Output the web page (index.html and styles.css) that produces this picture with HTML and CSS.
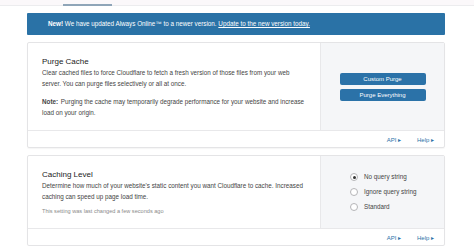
FILE: index.html
```html
<!DOCTYPE html>
<html lang="en">

<head>
    <meta charset="UTF-8">
    <meta name="viewport" content="width=device-width, initial-scale=1.0">
    <title>Caching</title>
    <link rel="stylesheet" href="styles.css">
</head>

<body>
    <nav class="tabs">
        <span class="tab active"></span>
    </nav>

    <main class="page">
        <div class="banner">
            <strong>New!</strong> We have updated Always Online™ to a newer version.
            <a href="#">Update to the new version today.</a>
        </div>

        <section class="card">
            <div class="card-main">
                <div class="card-text">
                    <h3>Purge Cache</h3>
                    <p>Clear cached files to force Cloudflare to fetch a fresh version of those files from your web<br>
                        server. You can purge files selectively or all at once.</p>
                    <p class="note"><strong>Note:</strong> Purging the cache may temporarily degrade performance for
                        your website and increase<br> load on your origin.</p>
                </div>
                <div class="card-control">
                    <div class="buttons">
                        <button>Custom Purge</button>
                        <button>Purge Everything</button>
                    </div>
                </div>
            </div>
            <div class="card-footer">
                <a href="#">API ▸</a>
                <a href="#">Help ▸</a>
            </div>
        </section>

        <section class="card">
            <div class="card-main">
                <div class="card-text">
                    <h3>Caching Level</h3>
                    <p>Determine how much of your website's static content you want Cloudflare to cache. Increased<br>
                        caching can speed up page load time.</p>
                    <p class="changed">This setting was last changed a few seconds ago</p>
                </div>
                <div class="card-control radios-wrap">
                    <div class="radios">
                        <label class="radio"><span class="dot checked"></span>No query string</label>
                        <label class="radio"><span class="dot"></span>Ignore query string</label>
                        <label class="radio"><span class="dot"></span>Standard</label>
                    </div>
                </div>
            </div>
            <div class="card-footer">
                <a href="#">API ▸</a>
                <a href="#">Help ▸</a>
            </div>
        </section>
    </main>
</body>

</html>
```

FILE: styles.css
```css
body {
    font-family: 'Liberation Sans', Arial, sans-serif;
    background-color: #fff;
    margin: 0;
    padding: 0;
    color: #333;
}

.tabs {
    display: flex;
    height: 5px;
    background-color: #fbf8fa;
    border-bottom: 1px solid #ececee;
}

.tab {
    width: 49px;
    margin-left: 63px;
}

.tab.active {
    border-bottom: 2px solid #8fa5b8;
    height: 4px;
}

.page {
    display: flex;
    flex-direction: column;
    gap: 7px;
    padding: 7px 29px 0 27px;
}

.banner {
    background-color: #2a72a6;
    color: #fff;
    font-size: 6.3px;
    line-height: 22px;
    height: 22px;
    padding-left: 21px;
    border-radius: 1px;
}

.banner a {
    color: #fff;
}

.card {
    border: 1px solid #e4e4e6;
    border-radius: 2px;
    box-shadow: 0 1px 1px rgba(0, 0, 0, 0.04);
}

.card-main {
    display: grid;
    grid-template-columns: 1fr 124px;
}

.card-text {
    padding: 13px 4px 12px 14px;
}

.card-text h3 {
    margin: 0;
    font-size: 8px;
    line-height: 11px;
    font-weight: 500;
    color: #222;
}

.card-text p {
    margin: 0;
    font-size: 6.3px;
    line-height: 11px;
    color: #444;
}

.card-text p.note {
    margin-top: 7px;
}

.card-text p.note strong {
    margin-right: 1px;
}

.card-text p.changed {
    margin-top: 5px;
    font-size: 5.6px;
    line-height: 9px;
    color: #8a8a8a;
}

.card-control {
    background-color: #f5f6f8;
    border-left: 1px solid #e8e8ea;
    display: flex;
    align-items: center;
    justify-content: center;
}

.radios-wrap {
    justify-content: flex-start;
    padding-left: 29px;
}

.buttons {
    display: flex;
    flex-direction: column;
    gap: 4px;
}

.buttons button {
    width: 86px;
    height: 12px;
    padding: 0;
    border: none;
    border-radius: 2px;
    background-color: #2b72a8;
    color: #fff;
    font-family: inherit;
    font-size: 6px;
}

.radios {
    display: flex;
    flex-direction: column;
    gap: 7px;
}

.radio {
    display: flex;
    align-items: center;
    gap: 6px;
    font-size: 6.3px;
    line-height: 8px;
    color: #444;
}

.dot {
    width: 6px;
    height: 6px;
    border: 1px solid #b5b5b8;
    border-radius: 50%;
    background: #fff;
    display: flex;
    align-items: center;
    justify-content: center;
}

.dot.checked::after {
    content: "";
    width: 3px;
    height: 3px;
    border-radius: 50%;
    background: #333;
}

.card-footer {
    display: flex;
    justify-content: flex-end;
    gap: 16px;
    height: 16px;
    align-items: center;
    padding-right: 10px;
    border-top: 1px solid #e8e8ea;
}

.card-footer a {
    font-size: 6px;
    color: #2b72a8;
    text-decoration: none;
}
```
